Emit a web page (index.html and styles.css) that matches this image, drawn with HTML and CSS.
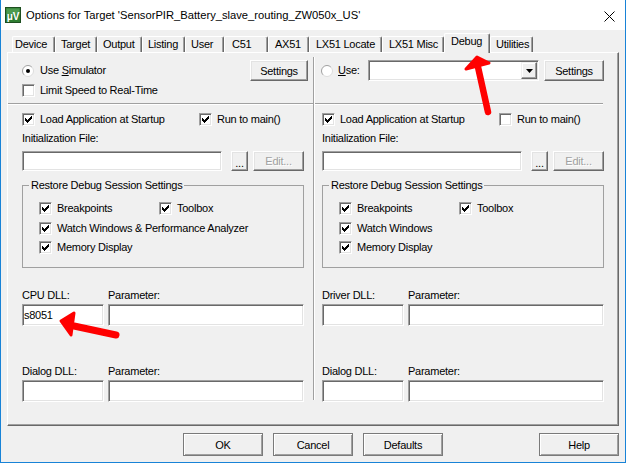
FILE: index.html
```html
<!DOCTYPE html>
<html>
<head>
<meta charset="utf-8">
<link rel="stylesheet" href="styles.css">
</head>
<body>
<div class="window">
  <div class="titlebar">
    <svg class="appicon" width="16" height="16" viewBox="0 0 16 16">
      <rect x="0.5" y="0.5" width="15" height="15" fill="#2f7d32" stroke="#1d4f20"/>
      <rect x="1.5" y="1.5" width="13" height="6" fill="#4c9a4f"/>
      <text x="8" y="12.5" text-anchor="middle" font-family="Liberation Sans" font-weight="bold" font-size="10" fill="#fff">μV</text>
    </svg>
    <span class="title">Options for Target 'SensorPIR_Battery_slave_routing_ZW050x_US'</span>
    <svg class="close" width="11" height="11" viewBox="0 0 11 11">
      <path d="M0.5 0.5 L10.5 10.5 M10.5 0.5 L0.5 10.5" stroke="#000" stroke-width="1"/>
    </svg>
  </div>

  <div class="client">
    <div class="tabs">
      <div class="tab t-device">Device</div>
      <div class="tab t-target">Target</div>
      <div class="tab t-output">Output</div>
      <div class="tab t-listing">Listing</div>
      <div class="tab t-user">User</div>
      <div class="tab t-c51">C51</div>
      <div class="tab t-ax51">AX51</div>
      <div class="tab t-locate">LX51 Locate</div>
      <div class="tab t-misc">LX51 Misc</div>
      <div class="tab t-debug sel">Debug</div>
      <div class="tab t-util">Utilities</div>
    </div>

    <div class="panel">
      <!-- LEFT COLUMN -->
      <div class="col left">
        <div class="row1">
          <label class="radio">
            <svg width="12" height="12" viewBox="0 0 12 12"><circle cx="6" cy="6" r="5.5" fill="#fff"/><path d="M2.11 9.89 A5.5 5.5 0 0 1 9.89 2.11" fill="none" stroke="#a0a0a0"/><path d="M9.89 2.11 A5.5 5.5 0 0 1 2.11 9.89" fill="none" stroke="#dcdcdc"/><circle cx="6" cy="6" r="2" fill="#000"/></svg>
            <span>Use <u>S</u>imulator</span>
          </label>
          <div class="btn settings-l">Settings</div>
        </div>
        <label class="chk row2"><span class="cb"></span><span>Limit Speed to Real-Time</span></label>
        <div class="sep sep-l"></div>
        <div class="row3">
          <label class="chk first"><span class="cb"><svg width="11" height="11" viewBox="0 0 11 11"><path d="M2 4h1v3h-1z M3 5h1v3h-1z M4 6h1v3h-1z M5 5h1v3h-1z M6 4h1v3h-1z M7 3h1v3h-1z M8 2h1v3h-1z" fill="#000"/></svg></span><span>Load Application at Startup</span></label>
          <label class="chk"><span class="cb"><svg width="11" height="11" viewBox="0 0 11 11"><path d="M2 4h1v3h-1z M3 5h1v3h-1z M4 6h1v3h-1z M5 5h1v3h-1z M6 4h1v3h-1z M7 3h1v3h-1z M8 2h1v3h-1z" fill="#000"/></svg></span><span>Run to main()</span></label>
        </div>
        <div class="lbl">Initialization File:</div>
        <div class="filerow">
          <div class="field file"></div>
          <div class="btn dots">...</div>
          <div class="btn edit disabled">Edit...</div>
        </div>
        <fieldset class="group">
          <legend>Restore Debug Session Settings</legend>
          <div class="grow">
            <label class="chk gfirst"><span class="cb"><svg width="11" height="11" viewBox="0 0 11 11"><path d="M2 4h1v3h-1z M3 5h1v3h-1z M4 6h1v3h-1z M5 5h1v3h-1z M6 4h1v3h-1z M7 3h1v3h-1z M8 2h1v3h-1z" fill="#000"/></svg></span><span>Breakpoints</span></label>
            <label class="chk"><span class="cb"><svg width="11" height="11" viewBox="0 0 11 11"><path d="M2 4h1v3h-1z M3 5h1v3h-1z M4 6h1v3h-1z M5 5h1v3h-1z M6 4h1v3h-1z M7 3h1v3h-1z M8 2h1v3h-1z" fill="#000"/></svg></span><span>Toolbox</span></label>
          </div>
          <div class="grow g2">
            <label class="chk"><span class="cb"><svg width="11" height="11" viewBox="0 0 11 11"><path d="M2 4h1v3h-1z M3 5h1v3h-1z M4 6h1v3h-1z M5 5h1v3h-1z M6 4h1v3h-1z M7 3h1v3h-1z M8 2h1v3h-1z" fill="#000"/></svg></span><span>Watch Windows &amp; Performance Analyzer</span></label>
          </div>
          <div class="grow g3">
            <label class="chk"><span class="cb"><svg width="11" height="11" viewBox="0 0 11 11"><path d="M2 4h1v3h-1z M3 5h1v3h-1z M4 6h1v3h-1z M5 5h1v3h-1z M6 4h1v3h-1z M7 3h1v3h-1z M8 2h1v3h-1z" fill="#000"/></svg></span><span>Memory Display</span></label>
          </div>
        </fieldset>
        <div class="dll first-dll">
          <div class="dlbl">CPU DLL:</div>
          <div class="dlbl">Parameter:</div>
          <div class="field dfield"><span class="val">s8051</span></div>
          <div class="field dfield"></div>
        </div>
        <div class="dll second-dll">
          <div class="dlbl">Dialog DLL:</div>
          <div class="dlbl">Parameter:</div>
          <div class="field dfield"></div>
          <div class="field dfield"></div>
        </div>
      </div>

      <div class="vdiv"></div>

      <!-- RIGHT COLUMN -->
      <div class="col right">
        <div class="row1">
          <label class="radio r-use">
            <svg width="12" height="12" viewBox="0 0 12 12"><circle cx="6" cy="6" r="5.5" fill="#fff"/><path d="M2.11 9.89 A5.5 5.5 0 0 1 9.89 2.11" fill="none" stroke="#a0a0a0"/><path d="M9.89 2.11 A5.5 5.5 0 0 1 2.11 9.89" fill="none" stroke="#dcdcdc"/></svg>
            <span><u>U</u>se:</span>
          </label>
          <div class="field combo">
            <div class="ddbtn"><svg width="7" height="4" viewBox="0 0 7 4"><path d="M0 0h7l-3.5 4z" fill="#000"/></svg></div>
          </div>
          <div class="btn settings-r">Settings</div>
        </div>
        <div class="row2 spacer"></div>
        <div class="sep sep-r"></div>
        <div class="row3">
          <label class="chk first"><span class="cb"><svg width="11" height="11" viewBox="0 0 11 11"><path d="M2 4h1v3h-1z M3 5h1v3h-1z M4 6h1v3h-1z M5 5h1v3h-1z M6 4h1v3h-1z M7 3h1v3h-1z M8 2h1v3h-1z" fill="#000"/></svg></span><span>Load Application at Startup</span></label>
          <label class="chk"><span class="cb"></span><span>Run to main()</span></label>
        </div>
        <div class="lbl">Initialization File:</div>
        <div class="filerow">
          <div class="field file"></div>
          <div class="btn dots">...</div>
          <div class="btn edit disabled">Edit...</div>
        </div>
        <fieldset class="group">
          <legend>Restore Debug Session Settings</legend>
          <div class="grow">
            <label class="chk gfirst"><span class="cb"><svg width="11" height="11" viewBox="0 0 11 11"><path d="M2 4h1v3h-1z M3 5h1v3h-1z M4 6h1v3h-1z M5 5h1v3h-1z M6 4h1v3h-1z M7 3h1v3h-1z M8 2h1v3h-1z" fill="#000"/></svg></span><span>Breakpoints</span></label>
            <label class="chk"><span class="cb"><svg width="11" height="11" viewBox="0 0 11 11"><path d="M2 4h1v3h-1z M3 5h1v3h-1z M4 6h1v3h-1z M5 5h1v3h-1z M6 4h1v3h-1z M7 3h1v3h-1z M8 2h1v3h-1z" fill="#000"/></svg></span><span>Toolbox</span></label>
          </div>
          <div class="grow g2">
            <label class="chk"><span class="cb"><svg width="11" height="11" viewBox="0 0 11 11"><path d="M2 4h1v3h-1z M3 5h1v3h-1z M4 6h1v3h-1z M5 5h1v3h-1z M6 4h1v3h-1z M7 3h1v3h-1z M8 2h1v3h-1z" fill="#000"/></svg></span><span>Watch Windows</span></label>
          </div>
          <div class="grow g3">
            <label class="chk"><span class="cb"><svg width="11" height="11" viewBox="0 0 11 11"><path d="M2 4h1v3h-1z M3 5h1v3h-1z M4 6h1v3h-1z M5 5h1v3h-1z M6 4h1v3h-1z M7 3h1v3h-1z M8 2h1v3h-1z" fill="#000"/></svg></span><span>Memory Display</span></label>
          </div>
        </fieldset>
        <div class="dll first-dll">
          <div class="dlbl">Driver DLL:</div>
          <div class="dlbl">Parameter:</div>
          <div class="field dfield"></div>
          <div class="field dfield"></div>
        </div>
        <div class="dll second-dll">
          <div class="dlbl">Dialog DLL:</div>
          <div class="dlbl">Parameter:</div>
          <div class="field dfield"></div>
          <div class="field dfield"></div>
        </div>
      </div>
    </div>

    <div class="buttons">
      <div class="btn bbtn">OK</div>
      <div class="btn bbtn">Cancel</div>
      <div class="btn bbtn">Defaults</div>
      <div class="btn bbtn help">Help</div>
    </div>
  </div>

  <svg class="annot" width="626" height="463" viewBox="0 0 626 463">
    <g fill="#f00" stroke="#f00" stroke-linecap="round" stroke-linejoin="round">
      <line x1="478" y1="67" x2="488" y2="112" stroke-width="6.5"/>
      <polygon points="466,69 477,57 489,63" stroke-width="3"/>
      <line x1="74" y1="326" x2="116" y2="335" stroke-width="7"/>
      <polygon points="61,321 74,313 71,335" stroke-width="3"/>
    </g>
  </svg>
</div>
</body>
</html>
```

FILE: styles.css
```css
html, body {
  margin: 0;
  padding: 0;
}
body {
  width: 626px;
  height: 463px;
  overflow: hidden;
  background: #fff;
  font-family: "Liberation Sans", Arial, sans-serif;
  font-size: 11px;
  letter-spacing: -0.25px;
  color: #000;
}
.window {
  position: relative;
  width: 626px;
  height: 463px;
  box-sizing: border-box;
  border: 1px solid #1883d7;
  border-top: none;
  background: #f0f0f0;
  display: flex;
  flex-direction: column;
}
.titlebar {
  flex: none;
  height: 30px;
  background: #fff;
  display: flex;
  align-items: center;
}
.appicon {
  margin-left: 4px;
  flex: none;
}
.title {
  margin-left: 5px;
  font-size: 11.2px;
  letter-spacing: 0;
  white-space: nowrap;
}
.close {
  margin-left: auto;
  margin-right: 10px;
  margin-top: 2px;
}
.client {
  flex: 1;
  display: flex;
  flex-direction: column;
  padding: 3px 6px 0 6px;
}

/* tabs */
.tabs {
  display: flex;
  align-items: flex-end;
  height: 19px;
  margin-left: 5px;
  flex: none;
}
.tab {
  box-sizing: border-box;
  height: 16px;
  border-top: 1px solid #fff;
  border-left: 1px solid #fff;
  border-right: 1px solid #696969;
  border-radius: 2px 2px 0 0;
  box-shadow: inset -1px 0 #a0a0a0;
  padding-left: 5px;
  line-height: 14px;
  white-space: nowrap;
  background: #f0f0f0;
}
.tab.sel {
  height: 20px;
  margin-bottom: -1px;
  position: relative;
  z-index: 1;
  padding-left: 6px;
}
.t-device { width: 43px; padding-left: 2px; }
.t-target { width: 42px; }
.t-output { width: 45px; }
.t-listing { width: 43px; }
.t-user { width: 39px; }
.t-c51 { width: 44px; padding-left: 7px; }
.t-ax51 { width: 41px; padding-left: 6px; }
.t-locate { width: 73px; padding-left: 6px; }
.t-misc { width: 62px; padding-left: 6px; }
.t-debug { width: 46px; }
.t-util { width: 43px; }

/* panel */
.panel {
  flex: none;
  height: 374px;
  box-sizing: border-box;
  border: 1px solid;
  border-color: #fff #696969 #696969 #fff;
  box-shadow: inset -1px -1px #a0a0a0;
  display: flex;
}
.col {
  display: flex;
  flex-direction: column;
  padding-top: 7px;
  box-sizing: border-box;
}
.col.left {
  width: 305px;
  padding-left: 14px;
  padding-right: 9px;
  flex: none;
}
.col.right {
  flex: 1;
  padding-left: 7px;
  padding-right: 14px;
}
.vdiv {
  flex: none;
  width: 1px;
  height: 343px;
  margin-top: 4px;
  background: #a0a0a0;
  border-right: 1px solid #fff;
}

.row1 {
  display: flex;
  align-items: center;
  height: 21px;
}
.radio {
  display: flex;
  align-items: center;
  gap: 6px;
  line-height: 13px;
}
.radio svg { flex: none; display: block; }
.r-use { gap: 5px; margin-left: -1px; }
.btn {
  box-sizing: border-box;
  display: flex;
  align-items: center;
  justify-content: center;
  border: 1px solid;
  border-color: #fff #696969 #696969 #fff;
  box-shadow: inset -1px -1px #a0a0a0, inset 1px 1px #e3e3e3;
  background: #f0f0f0;
  white-space: nowrap;
}
.settings-l {
  margin-left: auto;
  margin-right: -4px;
  width: 58px;
  height: 21px;
}
.settings-r {
  width: 60px;
  height: 21px;
  margin-left: 5px;
}
.field {
  box-sizing: border-box;
  background: #fff;
  border: 1px solid;
  border-color: #a0a0a0 #fff #fff #a0a0a0;
  box-shadow: inset 1px 1px #696969, inset -1px -1px #e3e3e3;
}
.combo {
  margin-left: auto;
  width: 171px;
  height: 21px;
  display: flex;
  justify-content: flex-end;
  padding: 1px;
}
.ddbtn {
  box-sizing: border-box;
  width: 16px;
  height: 17px;
  border: 1px solid;
  border-color: #f0f0f0 #696969 #696969 #f0f0f0;
  box-shadow: inset -1px -1px #a0a0a0, inset 1px 1px #fff;
  background: #f0f0f0;
  display: flex;
  align-items: center;
  justify-content: center;
}
.ddbtn svg { display: block; }

.chk {
  display: flex;
  align-items: center;
  gap: 5px;
  height: 13px;
  line-height: 13px;
  white-space: nowrap;
}
.cb {
  flex: none;
  box-sizing: border-box;
  width: 13px;
  height: 13px;
  background: #fff;
  border: 1px solid;
  border-color: #a0a0a0 #fff #fff #a0a0a0;
  box-shadow: inset 1px 1px #696969, inset -1px -1px #e3e3e3;
  position: relative;
}
.cb svg { display: block; }
.row2 {
  margin-top: 3px;
  height: 13px;
}
.sep {
  height: 0;
  border-top: 1px solid #a0a0a0;
  border-bottom: 1px solid #fff;
  margin-top: 6px;
}
.sep-l { margin-left: -14px; margin-right: -9px; }
.sep-r { margin-left: -7px; margin-right: 1px; }
.row3 {
  display: flex;
  margin-top: 8px;
}
.row3 .first { width: 177px; }
.lbl {
  margin-top: 6px;
  height: 13px;
  line-height: 13px;
}
.filerow {
  display: flex;
  margin-top: 6px;
  height: 20px;
}
.file { width: 200px; height: 20px; }
.dots { width: 17px; height: 20px; margin-left: 9px; padding-top: 3px; }
.edit { width: 51px; height: 20px; margin-left: 5px; }
.disabled {
  color: #a0a0a0;
  text-shadow: 1px 1px 0 #fff;
}

.group {
  box-sizing: border-box;
  width: 282px;
  margin: 8px 0 0 0;
  padding: 10px 0 13px 16px;
  border: 1px solid #a0a0a0;
  min-inline-size: 0;
}
.group legend {
  padding: 0 2px;
  margin-left: -10px;
  line-height: 13px;
  height: 13px;
}
.grow { display: flex; }
.grow .gfirst { width: 120px; }
.g2 { margin-top: 7px; }
.g3 { margin-top: 6px; }

.dll {
  display: grid;
  grid-template-columns: 82px 196px;
  column-gap: 4px;
  grid-template-rows: 13px 22px;
  row-gap: 2px;
}
.first-dll { margin-top: 21px; }
.second-dll { margin-top: 39px; }
.dlbl { line-height: 13px; white-space: nowrap; }
.dfield { height: 22px; display: flex; align-items: center; }
.val { padding-left: 1px; line-height: 13px; }

.buttons {
  flex: none;
  display: flex;
  margin-top: 7px;
  height: 23px;
  padding-left: 176px;
}
.bbtn {
  width: 80px;
  height: 23px;
  margin-right: 10px;
  border: 1px solid #7a7a7a;
  box-shadow: inset 1px 1px #fff, inset -1px -1px #a0a0a0;
}
.bbtn.help {
  margin-left: auto;
  margin-right: 0;
}

.annot {
  position: absolute;
  left: -1px;
  top: 0;
  pointer-events: none;
}
```
